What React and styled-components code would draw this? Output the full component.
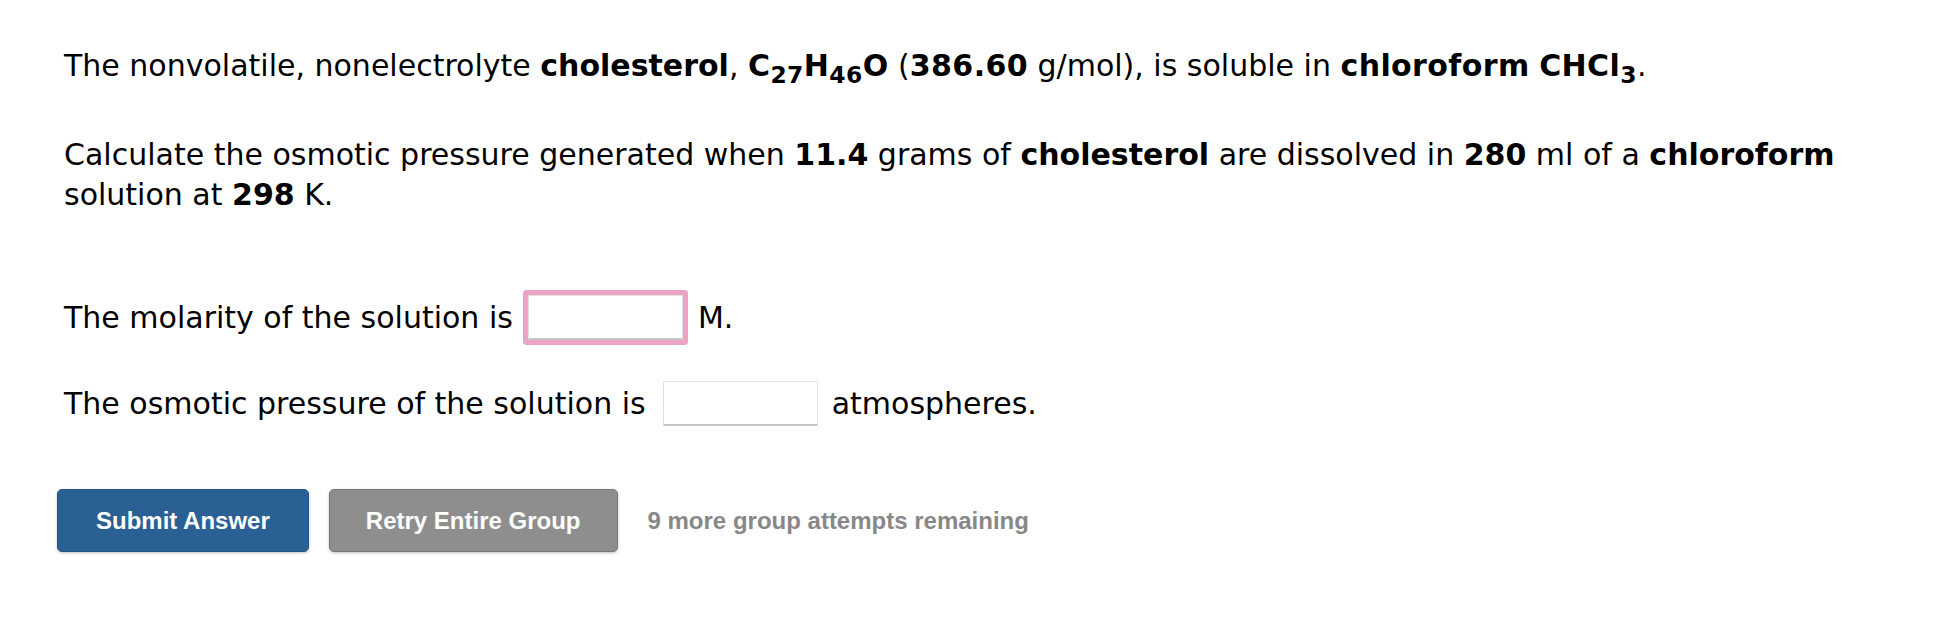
import React from "react";
import styled, { createGlobalStyle } from "styled-components";

const Global = createGlobalStyle`
  html, body { margin: 0; padding: 0; background: #ffffff; }
  body { font-family: "DejaVu Sans", Verdana, sans-serif; color: #000; }
`;

const Page = styled.div`
  padding: 46px 0 40px 57px;
`;

const Para = styled.p`
  margin: ${(p) => p.$mt || 0}px 0 0 7px;
  font-size: 30px;
  line-height: 40px;
  max-width: 1810px;
`;

const Strong = styled.b`
  font-weight: 700;
  letter-spacing: ${(p) => (p.$wide ? "0.4px" : "0")};
`;

const Sub = styled.sub`
  font-size: 0.78em;
  vertical-align: -0.3em;
  line-height: 0;
`;

const Row = styled.div`
  display: flex;
  align-items: center;
  height: 45px;
  margin: ${(p) => p.$mt}px 0 0 7px;
  font-size: 30px;
`;

const Input = styled.input`
  box-sizing: border-box;
  width: 155px;
  height: 45px;
  margin: 0 ${(p) => p.$mr}px 0 ${(p) => p.$ml}px;
  border: 1px solid #e2e2e2;
  border-bottom: 2px solid #c6c6c6;
  border-radius: 1px;
  background: #fff;
  outline: none;
  font: inherit;
  box-shadow: ${(p) => (p.$focus ? "0 0 0 5px #eba4c5" : "none")};
`;

const Actions = styled.div`
  display: flex;
  align-items: center;
  gap: 20px;
  margin-top: 63px;
`;

const Button = styled.button`
  box-sizing: border-box;
  height: 63px;
  padding: 0 ${(p) => (p.$primary ? 38 : 36)}px;
  border-radius: 5px;
  border: 1px solid ${(p) => (p.$primary ? "#245685" : "#777777")};
  background: ${(p) => (p.$primary ? "#2a6094" : "#8e8e8e")};
  color: #ffffff;
  font-family: "Liberation Sans", Arial, sans-serif;
  font-weight: 700;
  font-size: 24px;
  box-shadow: 0 1px 3px rgba(0, 0, 0, 0.25);
  cursor: pointer;
`;

const Attempts = styled.span`
  margin-left: 10px;
  font-family: "Liberation Sans", Arial, sans-serif;
  font-weight: 700;
  font-size: 24px;
  color: #888888;
`;

export default function App() {
  return (
    <>
      <Global />
      <Page>
        <Para>
          The nonvolatile, nonelectrolyte <Strong>cholesterol</Strong>,{" "}
          <Strong $wide>
            C<Sub>27</Sub>H<Sub>46</Sub>O
          </Strong>{" "}
          (<Strong $wide>386.60</Strong> g/mol), is soluble in{" "}
          <Strong $wide>chloroform</Strong>{" "}
          <Strong $wide>
            CHCl<Sub>3</Sub>
          </Strong>
          .
        </Para>
        <Para $mt={49}>
          Calculate the osmotic pressure generated when <Strong>11.4</Strong>{" "}
          grams of <Strong>cholesterol</Strong> are dissolved in{" "}
          <Strong>280</Strong> ml of a <Strong>chloroform</Strong> solution at{" "}
          <Strong>298</Strong> K.
        </Para>
        <Row $mt={80}>
          The molarity of the solution is
          <Input $focus $ml={15} $mr={15} />
          M.
        </Row>
        <Row $mt={41}>
          The osmotic pressure of the solution is
          <Input $ml={17} $mr={14} />
          atmospheres.
        </Row>
        <Actions>
          <Button $primary>Submit Answer</Button>
          <Button>Retry Entire Group</Button>
          <Attempts>9 more group attempts remaining</Attempts>
        </Actions>
      </Page>
    </>
  );
}
